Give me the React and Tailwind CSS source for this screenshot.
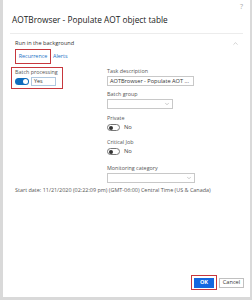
import { ChevronDown, ChevronUp } from 'lucide-react'

function Toggle({ on }) {
  if (on) {
    return (
      <span className="flex h-[7px] w-[14px] items-center justify-end rounded-full bg-[#0f6cbd] pr-[1px]">
        <span className="h-[5px] w-[5px] rounded-full bg-white" />
      </span>
    )
  }
  return (
    <span className="flex h-[7px] w-[13px] items-center rounded-full border border-[#777] bg-white pl-[1px]">
      <span className="h-[4px] w-[4px] rounded-full bg-[#333]" />
    </span>
  )
}

function Label({ children, className = '' }) {
  return (
    <div className={`h-[10px] text-[5.4px] leading-[10px] text-[#555] ${className}`}>
      {children}
    </div>
  )
}

function Dropdown({ width }) {
  return (
    <div
      className={`flex h-[10px] items-center justify-end border border-[#c8c8c8] pr-[2px] text-[#777] ${width}`}
    >
      <ChevronDown size={6} strokeWidth={1.5} />
    </div>
  )
}

function ToggleRow() {
  return (
    <div className="flex h-[9px] items-center gap-[4px]">
      <Toggle />
      <span className="text-[5.8px] leading-none text-[#444]">No</span>
    </div>
  )
}

export default function App() {
  return (
    <div
      className="flex h-[300px] w-[252px] flex-col border-b-[3px] border-l-[3px] border-r-[2px] border-[#d9d9d9] bg-white"
      style={{ fontFamily: '"Open Sans", "Noto Sans", sans-serif' }}
    >
      <div className="flex h-[14px] justify-end pr-[7px] text-[7px] leading-[14px] text-[#aaa]">
        ?
      </div>

      <div className="h-[12px] pl-[9px] text-[8.3px] leading-[12px] text-[#222]">
        AOTBrowser - Populate AOT object table
      </div>

      <div className="mx-[7px] mt-[7px] h-px bg-[#ececec]" />

      <div className="mt-[4px] flex h-[10px] items-center justify-between pl-[12px] pr-[11px]">
        <span className="text-[5.6px] text-[#333]">Run in the background</span>
        <ChevronUp size={7} strokeWidth={1.5} className="text-[#999]" />
      </div>

      <div className="mt-px flex items-center gap-[2px] pl-[12px] text-[5.4px] text-[#1a6fc4]">
        <span className="flex h-[15px] w-[36px] items-center justify-center border border-[#c7373d]">
          Recurrence
        </span>
        <span>Alerts</span>
      </div>

      <div className="mt-[2px] flex">
        <div className="w-[104px] pl-[8px] pt-px">
          <div className="h-[22px] w-[52px] border border-[#c7373d] pl-[3px]">
            <div className="h-[9px] text-[5.4px] leading-[9px] text-[#555]">
              Batch processing
            </div>
            <div className="flex items-center gap-[2px]">
              <Toggle on />
              <span className="flex h-[9px] w-[25px] items-center border border-[#b0c8e0] pl-[2px] text-[5.4px] text-[#333]">
                Yes
              </span>
            </div>
          </div>
        </div>

        <div className="flex-1">
          <Label>Task description</Label>
          <div className="flex h-[10px] w-[87px] items-center border border-[#c8c8c8] pl-[2px] text-[5.6px] text-[#333]">
            AOTBrowser - Populate AOT ...
          </div>

          <Label className="mt-[3px] h-[9px] leading-[9px]">Batch group</Label>
          <Dropdown width="w-[66px]" />

          <Label className="mt-[4px]">Private</Label>
          <ToggleRow />

          <Label className="mt-[5px]">Critical Job</Label>
          <ToggleRow />

          <Label className="mt-[7px]">Monitoring category</Label>
          <Dropdown width="w-[88px]" />
        </div>
      </div>

      <div className="mt-[2px] h-[10px] pl-[12px] text-[5.45px] leading-[10px] text-[#555]">
        Start date: 11/21/2020 (02:22:09 pm) (GMT-06:00) Central Time (US &amp; Canada)
      </div>

      <div className="flex-1" />

      <div className="flex items-center justify-end gap-[2px] pb-[7px] pr-[6px]">
        <div className="flex h-[15px] w-[26px] items-center justify-center border border-[#c7373d]">
          <button className="flex h-[10px] w-[20px] items-center justify-center bg-[#1467e0] text-[5.6px] font-bold text-white">
            OK
          </button>
        </div>
        <button className="flex h-[10px] w-[25px] items-center justify-center border border-[#c0c0c0] bg-white text-[5.6px] text-[#333]">
          Cancel
        </button>
      </div>
    </div>
  )
}
